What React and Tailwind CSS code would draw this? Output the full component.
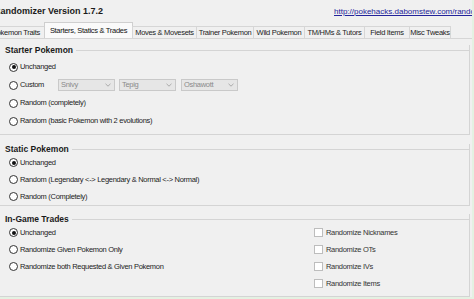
import React from "react";

const tabs = [
    { label: "Pokemon Traits", w: "w-[58px]", cls: "-ml-[13px]" },
    { label: "Starters, Statics & Trades", w: "w-[89px]", active: true },
    { label: "Moves & Movesets", w: "w-[65px]" },
    { label: "Trainer Pokemon", w: "w-[58px]" },
    { label: "Wild Pokemon", w: "w-[52px]" },
    { label: "TM/HMs & Tutors", w: "w-[61px]" },
    { label: "Field Items", w: "w-[46px]" },
    { label: "Misc Tweaks", w: "w-[42px]" },
];

const Radio = ({ checked }) => (
    <span className="w-[9px] h-[9px] rounded-full border border-[#333] bg-white flex items-center justify-center shrink-0">
        {checked && <span className="w-[4px] h-[4px] rounded-full bg-[#111]"></span>}
    </span>
);

const Check = () => (
    <span className="w-[9px] h-[9px] border border-[#bdbdbd] bg-white shrink-0"></span>
);

const RadioRow = ({ label, checked, h = "h-[17px]", labelW = "", children }) => (
    <div className={`flex items-center pl-[9px] ${h}`}>
        <Radio checked={checked} />
        <span className={`ml-[2px] whitespace-nowrap ${labelW}`}>{label}</span>
        {children}
    </div>
);

const Combo = ({ value }) => (
    <div className="w-[57px] h-[12px] border border-[#c9c9c9] bg-[#e6e6e6] flex items-center justify-between px-[2px] text-[#8a8a8a]">
        <span>{value}</span>
        <svg width="6" height="4" viewBox="0 0 6 4" className="mr-[1px]">
            <path d="M0.5 0.8 L3 3.2 L5.5 0.8" fill="none" stroke="#9a9a9a" strokeWidth="0.8" />
        </svg>
    </div>
);

const GroupHeader = ({ title }) => (
    <div className="flex items-center h-[10px] pl-[5px]">
        <span className="font-bold text-[8.5px] tracking-normal text-[#1a1a1a] whitespace-nowrap">{title}</span>
        <div className="flex-1 ml-[3px] border-t border-[#d4d4d4]"></div>
    </div>
);

export default function App() {
    return (
        <div
            className="w-[474px] h-[299px] overflow-hidden bg-[#f0f0f0] text-[7.5px] tracking-[-0.3px] leading-none text-[#1c1c1c] border-r-2 border-b-2 border-[#e4f1e2]"
            style={{ fontFamily: '"Liberation Sans", Arial, sans-serif' }}
        >
            {/* header */}
            <div className="h-[22px] flex items-center">
                <div className="w-[334px] shrink-0">
                    <span className="font-bold -ml-[6px] text-[9px] tracking-normal text-[#1a1a1a] whitespace-nowrap inline-block">Randomizer Version 1.7.2</span>
                </div>
                <span className="text-[#23239a] text-[8px] tracking-normal underline whitespace-nowrap mt-[2px]">http://pokehacks.dabomstew.com/randomizer/</span>
            </div>

            {/* tabs */}
            <div className="flex items-end h-[16px]">
                {tabs.map((t) => (
                    <div
                        key={t.label}
                        className={`${t.w} ${t.cls || "-ml-px"} shrink-0 flex items-center justify-center whitespace-nowrap border border-b-0 ${
                            t.active
                                ? "h-[16px] bg-[#fafafa] border-[#cfcfcf] text-[#111]"
                                : "h-[12px] bg-[#f0f0f0] border-[#d6d6d6]"
                        }`}
                    >
                        {t.label}
                    </div>
                ))}
            </div>

            {/* panel */}
            <div className="border-t border-[#d6d6d6] pt-[6px] pr-[2px]">
                {/* Starter Pokemon */}
                <div className="border-r border-b border-[#d4d4d4] pb-[4px]">
                    <GroupHeader title="Starter Pokemon" />
                    <div className="pt-[3px]">
                        <RadioRow label="Unchanged" checked h="h-[18px]" />
                        <RadioRow label="Custom" h="h-[18px]" labelW="w-[38px]">
                            <div className="flex items-center gap-[4px]">
                                <Combo value="Snivy" />
                                <Combo value="Tepig" />
                                <div className="ml-[1px]">
                                    <Combo value="Oshawott" />
                                </div>
                            </div>
                        </RadioRow>
                        <RadioRow label="Random (completely)" h="h-[18px]" />
                        <RadioRow label="Random (basic Pokemon with 2 evolutions)" h="h-[18px]" />
                    </div>
                </div>

                {/* Static Pokemon */}
                <div className="mt-[9px] border-r border-b border-[#d4d4d4]">
                    <GroupHeader title="Static Pokemon" />
                    <RadioRow label="Unchanged" checked />
                    <RadioRow label="Random (Legendary <-> Legendary & Normal <-> Normal)" />
                    <RadioRow label="Random (Completely)" />
                </div>

                {/* In-Game Trades */}
                <div className="mt-[8px] border-r border-b border-[#d4d4d4] pb-[4px]">
                    <GroupHeader title="In-Game Trades" />
                    <div className="flex">
                        <div className="w-[314px]">
                            <RadioRow label="Unchanged" checked />
                            <RadioRow label="Randomize Given Pokemon Only" />
                            <RadioRow label="Randomize both Requested & Given Pokemon" />
                        </div>
                        <div className="flex-1 text-[#333]">
                            {["Randomize Nicknames", "Randomize OTs", "Randomize IVs", "Randomize Items"].map((l) => (
                                <div key={l} className="flex items-center h-[17px]">
                                    <Check />
                                    <span className="ml-[3px] whitespace-nowrap">{l}</span>
                                </div>
                            ))}
                        </div>
                    </div>
                </div>
            </div>
        </div>
    );
}
